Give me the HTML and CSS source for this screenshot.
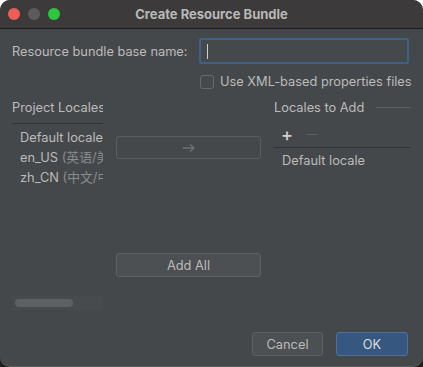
FILE: index.html
```html
<!DOCTYPE html>
<html lang="en">

<head>
    <meta charset="UTF-8">
    <title>Create Resource Bundle</title>
    <link rel="stylesheet" href="styles.css">
</head>

<body>
    <div class="window">
        <div class="titlebar">
            <div class="lights">
                <span class="light red"></span>
                <span class="light gray"></span>
                <span class="light green"></span>
            </div>
            <div class="title">Create Resource Bundle</div>
            <div></div>
        </div>

        <div class="content">
            <div class="name-row">
                <label class="label">Resource bundle base name:</label>
                <div class="input"><span class="caret"></span></div>
            </div>

            <div class="check-row">
                <span class="checkbox"></span>
                <span>Use XML-based properties files</span>
            </div>

            <div class="columns">
                <div class="col left">
                    <div class="head underlined">Project Locales</div>
                    <ul class="list">
                        <li>Default locale</li>
                        <li>en_US <span class="dim">(英语/美国)</span></li>
                        <li>zh_CN <span class="dim">(中文/中国)</span></li>
                    </ul>
                    <div class="hscroll"><span class="thumb"></span></div>
                </div>

                <div class="col middle">
                    <div class="btn ghost">
                        <svg width="14" height="10" viewBox="0 0 14 10">
                            <path d="M1 5H12M8 1.5L12 5L8 8.5" fill="none" stroke="#6c6f71" stroke-width="1.5" />
                        </svg>
                    </div>
                    <div class="btn add-all">Add All</div>
                </div>

                <div class="col right">
                    <div class="head titled"><span>Locales to Add</span><span class="rule"></span></div>
                    <div class="toolbar">
                        <span class="plus">+</span>
                        <span class="minus"></span>
                    </div>
                    <ul class="list target">
                        <li>Default locale</li>
                    </ul>
                </div>
            </div>

            <div class="actions">
                <div class="btn cancel">Cancel</div>
                <div class="btn ok">OK</div>
            </div>
        </div>
    </div>
</body>

</html>
```

FILE: styles.css
```css
html,
body {
    margin: 0;
    padding: 0;
}

body {
    width: 423px;
    height: 367px;
    background: linear-gradient(#ffffff 50%, #1f1f1f 50%);
    font-family: Inter, "Noto Sans CJK SC", sans-serif;
    font-size: 12.8px;
    color: #bbbbbb;
}

.window {
    width: 423px;
    height: 367px;
    box-sizing: border-box;
    border-radius: 10px;
    overflow: hidden;
    background: #45484a;
    display: flex;
    flex-direction: column;
    border-bottom: 1px solid #5a5c5e;
}

/* title bar */
.titlebar {
    height: 28px;
    background: #3c3a3a;
    border-bottom: 1px solid #1b1b1b;
    display: grid;
    grid-template-columns: 1fr auto 1fr;
    align-items: center;
}

.lights {
    display: flex;
    gap: 8px;
    padding-left: 8px;
}

.light {
    width: 12px;
    height: 12px;
    border-radius: 50%;
}

.light.red { background: #ee5e58; }
.light.gray { background: #5c5b5b; }
.light.green { background: #2ac73f; }

.title {
    font-weight: 700;
    font-size: 13px;
    color: #b9b8b8;
}

/* dialog body */
.content {
    flex: 1;
    display: flex;
    flex-direction: column;
    padding: 9px 14px 0 12px;
}

.name-row {
    display: flex;
    align-items: center;
    height: 26px;
}

.input {
    margin-left: auto;
    width: 210px;
    height: 26px;
    box-sizing: border-box;
    border: 2px solid #3d6287;
    border-radius: 2px;
    background: #46494b;
    display: flex;
    align-items: center;
    padding-left: 6px;
}

.caret {
    width: 1px;
    height: 15px;
    background: #cfcfcf;
}

.check-row {
    display: flex;
    align-items: center;
    gap: 6px;
    margin: 10px -14px 0 188px;
    height: 15px;
    white-space: nowrap;
}

.checkbox {
    width: 12px;
    height: 12px;
    border: 1px solid #686a6c;
    border-radius: 3px;
    background: #45494b;
}

.columns {
    display: grid;
    grid-template-columns: 91px 145px 137px;
    column-gap: 13px;
    margin-top: 10px;
    height: 220px;
}

.col {
    display: flex;
    flex-direction: column;
}

.head {
    height: 17px;
    line-height: 17px;
    white-space: nowrap;
    overflow: hidden;
}

.underlined {
    height: 24px;
    border-bottom: 1px solid #323435;
}

.titled {
    display: flex;
    align-items: center;
    gap: 12px;
}

.rule {
    flex: 1;
    height: 1px;
    background: #5c5f61;
}

.list {
    list-style: none;
    margin: 0;
    padding: 4px 0 0 8px;
}

.list li {
    height: 20px;
    line-height: 20px;
    white-space: nowrap;
    overflow: hidden;
}

.dim {
    color: #8a8c8e;
}

.hscroll {
    margin-top: auto;
    margin-bottom: 9px;
    height: 14px;
    background: #484b4d;
    display: flex;
    align-items: center;
    padding-left: 3px;
}

.thumb {
    width: 58px;
    height: 8px;
    border-radius: 4px;
    background: #5e6163;
}

.middle {
    padding-top: 37px;
}

.btn {
    box-sizing: border-box;
    height: 24px;
    border-radius: 3px;
    display: flex;
    align-items: center;
    justify-content: center;
}

.ghost {
    height: 23px;
    border: 1px solid #5b5e60;
}

.add-all {
    margin-top: 94px;
    background: #4c5052;
    border: 1px solid #5e6264;
}

.toolbar {
    display: flex;
    align-items: center;
    gap: 14px;
    height: 27px;
    padding: 1px 0 0 7px;
    box-sizing: border-box;
    border-bottom: 1px solid #323435;
    margin-top: 5px;
}

.plus {
    font-size: 18px;
    font-weight: 500;
    color: #d0d0d0;
    line-height: 18px;
}

.minus {
    width: 10px;
    height: 1.5px;
    background: #5d6062;
}

.target {
    padding-left: 8px;
    padding-top: 3px;
}

.actions {
    display: flex;
    justify-content: flex-end;
    gap: 13px;
    margin-top: 13px;
    padding-right: 1px;
}

.cancel {
    width: 71px;
    background: #4c5052;
    border: 1px solid #5e6264;
}

.ok {
    width: 72px;
    background: #365880;
    border: 1px solid #4c709a;
    color: #dedede;
}
```
